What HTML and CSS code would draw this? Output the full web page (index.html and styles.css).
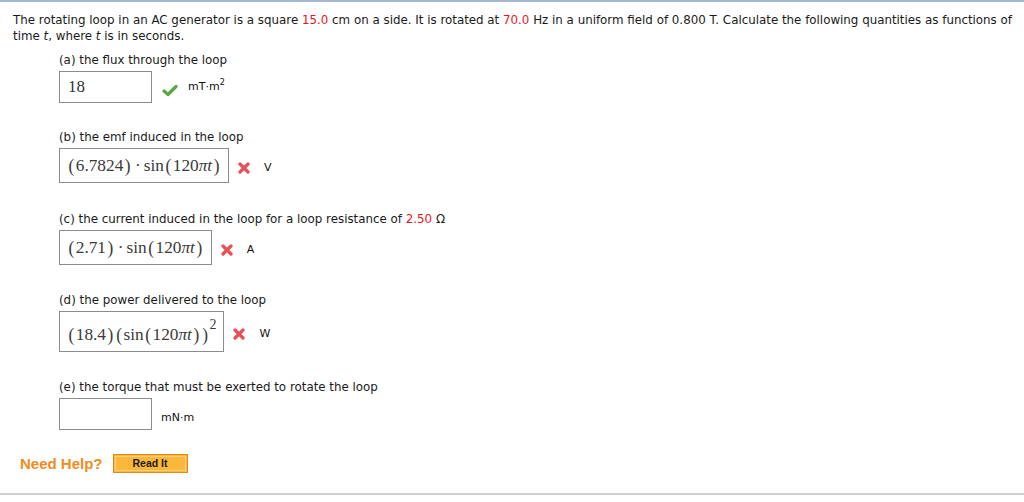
FILE: index.html
```html
<!DOCTYPE html>
<html>
<head>
<meta charset="utf-8">
<link rel="stylesheet" href="styles.css">
</head>
<body>
<div class="page">
  <p class="intro">The rotating loop in an AC generator is a square <span class="red">15.0</span> cm on a side. It is rotated at <span class="red">70.0</span> Hz in a uniform field of 0.800 T. Calculate the following quantities as functions of time <i>t</i>, where <i>t</i> is in seconds.</p>

  <div class="part part-a">
    <div class="label">(a) the flux through the loop</div>
    <div class="row">
      <div class="box box-small"><span class="plain">18</span></div>
      <svg class="check" width="16" height="13" viewBox="0 0 16 13"><path d="M2 7 L6 10.5 L14 2.5" fill="none" stroke="#5aa642" stroke-width="3.2" stroke-linecap="round" stroke-linejoin="round"/></svg>
      <span class="unit unit-a">mT·m<sup>2</sup></span>
    </div>
  </div>

  <div class="part part-b">
    <div class="label">(b) the emf induced in the loop</div>
    <div class="row">
      <div class="box box-math"><span class="math"><span class="p">(</span>6.7824<span class="p">)</span><span class="dot">·</span>sin<span class="p">(</span>120<i>πt</i><span class="p">)</span></span></div>
      <svg class="cross" width="12" height="12" viewBox="0 0 12 12"><path d="M2 2 L10 10 M10 2 L2 10" stroke="#ea4e57" stroke-width="3.2" stroke-linecap="round"/></svg>
      <span class="unit">V</span>
    </div>
  </div>

  <div class="part part-c">
    <div class="label">(c) the current induced in the loop for a loop resistance of <span class="red">2.50</span> Ω</div>
    <div class="row">
      <div class="box box-math"><span class="math"><span class="p">(</span>2.71<span class="p">)</span><span class="dot">·</span>sin<span class="p">(</span>120<i>πt</i><span class="p">)</span></span></div>
      <svg class="cross" width="12" height="12" viewBox="0 0 12 12"><path d="M2 2 L10 10 M10 2 L2 10" stroke="#ea4e57" stroke-width="3.2" stroke-linecap="round"/></svg>
      <span class="unit">A</span>
    </div>
  </div>

  <div class="part part-d">
    <div class="label">(d) the power delivered to the loop</div>
    <div class="row">
      <div class="box box-math box-tall"><span class="math"><span class="p">(</span>18.4<span class="p">)</span><span class="p">(</span>sin<span class="p">(</span>120<i>πt</i><span class="p">)</span><span class="p">)</span><sup class="msup">2</sup></span></div>
      <svg class="cross" width="12" height="12" viewBox="0 0 12 12"><path d="M2 2 L10 10 M10 2 L2 10" stroke="#ea4e57" stroke-width="3.2" stroke-linecap="round"/></svg>
      <span class="unit">W</span>
    </div>
  </div>

  <div class="part part-e">
    <div class="label">(e) the torque that must be exerted to rotate the loop</div>
    <div class="row">
      <div class="box box-small"></div>
      <span class="unit unit-e">mN·m</span>
    </div>
  </div>

  <div class="help">
    <span class="need">Need Help?</span>
    <span class="readit"><span class="readit-inner">Read It</span></span>
  </div>
</div>
</body>
</html>
```

FILE: styles.css
```css
html, body {
  margin: 0;
  padding: 0;
  background: #fff;
}
.page {
  border-top: 2px solid #a4b8d0;
  border-bottom: 2px solid #d0d0d0;
  height: 495px;
  box-sizing: border-box;
  font-family: "DejaVu Sans", Verdana, sans-serif;
  font-size: 11.85px;
  color: #1a1a1a;
}
.intro {
  margin: 0;
  padding: 10px 6px 0 13px;
  line-height: 16px;
}
.red { color: #e8161c; }
.part {
  padding-left: 59px;
}
.label {
  line-height: 16px;
}
.part-a { margin-top: 8px; }
.part-b { margin-top: 26px; }
.part-c { margin-top: 28px; }
.part-d { margin-top: 27px; }
.part-e { margin-top: 27px; }
.row {
  display: flex;
  align-items: center;
  margin-top: 3px;
}
.box {
  border: 1px solid #8c8c8c;
  box-sizing: border-box;
  display: flex;
  align-items: center;
  background: #fff;
}
.box-small {
  width: 93px;
  height: 32px;
  padding-left: 8px;
}
.plain {
  font-family: "Liberation Serif", serif;
  font-size: 17px;
  color: #333;
}
.box-math {
  height: 35px;
  padding: 0 7px;
}
.box-tall {
  height: 41px;
  padding-top: 6px;
}
.math {
  font-family: "Liberation Serif", serif;
  font-size: 17.3px;
  color: #3a3a3a;
  white-space: nowrap;
}
.math i {
  font-style: italic;
}
.p {
  display: inline-block;
  margin: 0 1.5px;
  transform: scaleY(1.12);
}
.dot {
  margin: 0 3px;
}
.msup {
  font-size: 14px;
  vertical-align: 11px;
  line-height: 0;
}
.check {
  margin-left: 10px;
  margin-top: 6px;
}
.cross {
  margin-left: 9px;
  margin-top: 4px;
}
.unit {
  margin-left: 14px;
  font-family: "DejaVu Sans", Verdana, sans-serif;
  font-size: 11px;
  color: #111;
  margin-top: 3px;
}
.unit-a { margin-left: 10px; margin-top: -2px; }
.unit sup {
  font-size: 8px;
  line-height: 0;
}
.unit-e { margin-left: 9px; margin-top: 6px; }
.help {
  display: flex;
  align-items: center;
  padding-left: 20px;
  margin-top: 24px;
}
.need {
  font-family: "Liberation Sans", Arial, sans-serif;
  font-weight: bold;
  font-size: 15px;
  color: #f08b1d;
}
.readit {
  margin-left: 10px;
  border: 1px solid #e08a1a;
  background: #fbb63c;
  padding: 1px;
  display: inline-block;
}
.readit-inner {
  display: block;
  border: 1px solid #f9cf7a;
  width: 69px;
  height: 13px;
  line-height: 13px;
  text-align: center;
  font-family: "Liberation Sans", Arial, sans-serif;
  font-weight: bold;
  font-size: 10.5px;
  color: #1a1a1a;
}
```
